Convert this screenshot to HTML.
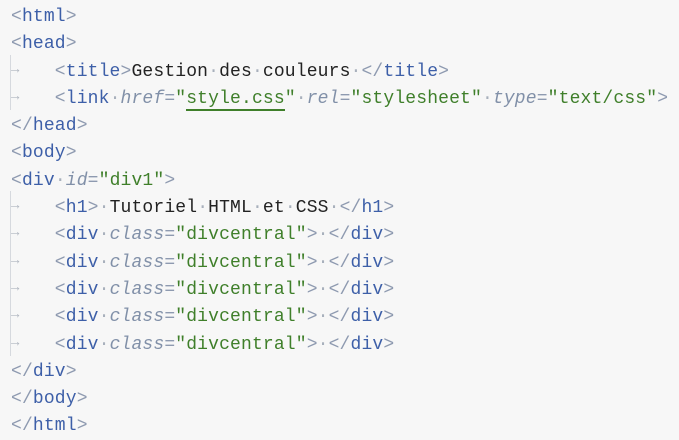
<!DOCTYPE html>
<html><head><meta charset="utf-8"><style>
html,body{margin:0;padding:0;background:#f7f7f7;width:679px;height:440px;overflow:hidden}
pre{margin:0;padding:4px 0 0 11px;font-family:"Liberation Mono",monospace;font-size:18px;letter-spacing:0.15px;line-height:27.3px;color:#222}
.p{color:#8e9ab0}.t{color:#3d5fa8}.a{color:#8190a8;font-style:italic}.s{color:#3f7f2a}.d{color:#a8b0bc}
.ar{color:#b0b6c0;position:relative;display:inline-block;width:10.95px;font-size:14px;line-height:10px;vertical-align:3px}
.ar::before{content:"";position:absolute;left:-1px;top:-10px;height:28px;width:1px;background:#d6d9de}
.u{border-bottom:2px solid #3f7f2a}
</style></head><body><pre><span class="p">&lt;</span><span class="t">html</span><span class="p">&gt;</span>
<span class="p">&lt;</span><span class="t">head</span><span class="p">&gt;</span>
<span class="ar">→</span>   <span class="p">&lt;</span><span class="t">title</span><span class="p">&gt;</span>Gestion<span class="d">·</span>des<span class="d">·</span>couleurs<span class="d">·</span><span class="p">&lt;/</span><span class="t">title</span><span class="p">&gt;</span>
<span class="ar">→</span>   <span class="p">&lt;</span><span class="t">link</span><span class="d">·</span><span class="a">href</span><span class="p">=</span><span class="s">"<span class="u">style.css</span>"</span><span class="d">·</span><span class="a">rel</span><span class="p">=</span><span class="s">"stylesheet"</span><span class="d">·</span><span class="a">type</span><span class="p">=</span><span class="s">"text/css"</span><span class="p">&gt;</span>
<span class="p">&lt;/</span><span class="t">head</span><span class="p">&gt;</span>
<span class="p">&lt;</span><span class="t">body</span><span class="p">&gt;</span>
<span class="p">&lt;</span><span class="t">div</span><span class="d">·</span><span class="a">id</span><span class="p">=</span><span class="s">"div1"</span><span class="p">&gt;</span>
<span class="ar">→</span>   <span class="p">&lt;</span><span class="t">h1</span><span class="p">&gt;</span><span class="d">·</span>Tutoriel<span class="d">·</span>HTML<span class="d">·</span>et<span class="d">·</span>CSS<span class="d">·</span><span class="p">&lt;/</span><span class="t">h1</span><span class="p">&gt;</span>
<span class="ar">→</span>   <span class="p">&lt;</span><span class="t">div</span><span class="d">·</span><span class="a">class</span><span class="p">=</span><span class="s">"divcentral"</span><span class="p">&gt;</span><span class="d">·</span><span class="p">&lt;/</span><span class="t">div</span><span class="p">&gt;</span>
<span class="ar">→</span>   <span class="p">&lt;</span><span class="t">div</span><span class="d">·</span><span class="a">class</span><span class="p">=</span><span class="s">"divcentral"</span><span class="p">&gt;</span><span class="d">·</span><span class="p">&lt;/</span><span class="t">div</span><span class="p">&gt;</span>
<span class="ar">→</span>   <span class="p">&lt;</span><span class="t">div</span><span class="d">·</span><span class="a">class</span><span class="p">=</span><span class="s">"divcentral"</span><span class="p">&gt;</span><span class="d">·</span><span class="p">&lt;/</span><span class="t">div</span><span class="p">&gt;</span>
<span class="ar">→</span>   <span class="p">&lt;</span><span class="t">div</span><span class="d">·</span><span class="a">class</span><span class="p">=</span><span class="s">"divcentral"</span><span class="p">&gt;</span><span class="d">·</span><span class="p">&lt;/</span><span class="t">div</span><span class="p">&gt;</span>
<span class="ar">→</span>   <span class="p">&lt;</span><span class="t">div</span><span class="d">·</span><span class="a">class</span><span class="p">=</span><span class="s">"divcentral"</span><span class="p">&gt;</span><span class="d">·</span><span class="p">&lt;/</span><span class="t">div</span><span class="p">&gt;</span>
<span class="p">&lt;/</span><span class="t">div</span><span class="p">&gt;</span>
<span class="p">&lt;/</span><span class="t">body</span><span class="p">&gt;</span>
<span class="p">&lt;/</span><span class="t">html</span><span class="p">&gt;</span></pre></body></html>
